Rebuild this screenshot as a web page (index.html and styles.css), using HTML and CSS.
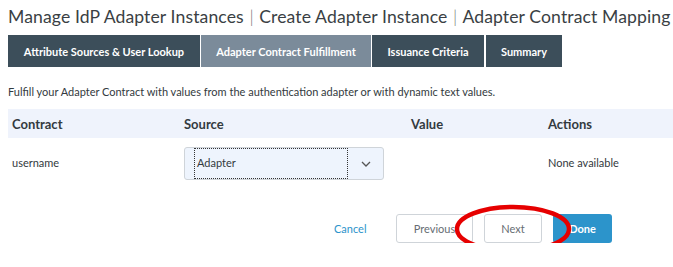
FILE: index.html
```html
<!DOCTYPE html>
<html lang="en">

<head>
    <meta charset="UTF-8">
    <title>Adapter Contract Mapping</title>
    <link rel="stylesheet" href="styles.css">
</head>

<body>
    <div class="page">
        <h1 class="page-title">
            Manage IdP Adapter Instances <span class="sep">|</span> Create Adapter Instance <span class="sep">|</span> Adapter Contract Mapping
        </h1>

        <div class="tabs">
            <div class="tab tab-1">Attribute Sources &amp; User Lookup</div>
            <div class="tab tab-2 active">Adapter Contract Fulfillment</div>
            <div class="tab tab-3">Issuance Criteria</div>
            <div class="tab tab-4">Summary</div>
        </div>

        <p class="intro">Fulfill your Adapter Contract with values from the authentication adapter or with dynamic text values.</p>

        <div class="grid">
            <div class="grid-head">
                <div class="col-contract">Contract</div>
                <div class="col-source">Source</div>
                <div class="col-value">Value</div>
                <div class="col-actions">Actions</div>
            </div>
            <div class="grid-row">
                <div class="col-contract">username</div>
                <div class="col-source">
                    <div class="select">
                        <span class="select-label">Adapter</span>
                        <span class="select-arrow">
                            <svg width="10" height="6" viewBox="0 0 10 6">
                                <path d="M1 1 L5 5 L9 1" fill="none" stroke="#555" stroke-width="1.3" />
                            </svg>
                        </span>
                    </div>
                </div>
                <div class="col-value"></div>
                <div class="col-actions">None available</div>
            </div>
        </div>

        <div class="footer">
            <a class="btn-link" href="#">Cancel</a>
            <button class="btn btn-prev">Previous</button>
            <span class="highlight">
                <button class="btn btn-next">Next</button>
                <svg class="circle" width="122" height="52" viewBox="0 0 122 52">
                    <ellipse cx="61" cy="26" rx="56" ry="22" fill="none" stroke="#e60000" stroke-width="4.5" />
                </svg>
            </span>
            <button class="btn btn-done">Done</button>
        </div>
    </div>
</body>

</html>
```

FILE: styles.css
```css
:root {
    --text: #333a40;
    --tab-dark: #3c4e5a;
    --tab-active: #7b8b9a;
    --head-bg: #eff3fc;
    --blue: #2c94cb;
    --border: #cfd4d9;
}

* {
    margin: 0;
    padding: 0;
    box-sizing: border-box;
}

body {
    font-family: 'Lato', 'Liberation Sans', sans-serif;
    color: var(--text);
    background: #fff;
}

.page {
    padding: 6px 0 0 8px;
}

.page-title {
    font-weight: 400;
    font-size: 17.6px;
    line-height: 22px;
    color: #3a3f44;
    white-space: nowrap;
    letter-spacing: 0.1px;
}

.page-title .sep {
    color: #777;
    font-weight: 300;
    padding: 0 1px;
}

/* wizard tabs */
.tabs {
    display: flex;
    gap: 1px;
    margin-top: 7px;
}

.tab {
    height: 32px;
    display: flex;
    align-items: center;
    justify-content: center;
    background: var(--tab-dark);
    color: #fff;
    font-size: 11px;
    font-weight: 700;
}

.tab.active {
    background: var(--tab-active);
}

.tab-1 { width: 192px; }
.tab-2 { width: 170px; }
.tab-3 { width: 112px; margin-right: 1px; }
.tab-4 { width: 76px; }

.intro {
    font-size: 11px;
    margin-top: 18px;
    line-height: 14px;
}

/* mapping table */
.grid {
    margin-top: 10px;
}

.grid-head,
.grid-row {
    display: grid;
    grid-template-columns: 176px 227px 137px 1fr;
    align-items: center;
}

.grid-head {
    height: 29px;
    background: var(--head-bg);
    font-size: 13px;
    font-weight: 700;
}

.grid-head > div,
.grid-row > div {
    padding-left: 4px;
}

.grid-head .col-source,
.grid-row .col-source,
.grid-head .col-value,
.grid-head .col-actions,
.grid-row .col-actions {
    padding-left: 0;
}

.grid-row {
    margin-top: 9px;
    font-size: 11px;
}

.grid-row .col-contract,
.grid-row .col-actions {
    padding-bottom: 2px;
}

.select {
    width: 200px;
    height: 33px;
    display: flex;
    background: #eef4fd;
    border: 1px solid var(--border);
    border-radius: 3px;
    font-size: 11px;
}

.select-label {
    flex: 1;
    display: flex;
    align-items: center;
    margin-left: 9px;
    border: 1px dotted #333;
    padding: 0 0 2px 2px;
}

.select-arrow {
    width: 35px;
    display: flex;
    align-items: center;
    justify-content: center;
}

/* footer buttons */
.footer {
    display: flex;
    align-items: center;
    margin-top: 34px;
    padding-left: 326px;
}

.btn-link {
    color: var(--blue);
    font-size: 11px;
    text-decoration: none;
    width: 62px;
}

.btn {
    font-family: 'Lato', 'Liberation Sans', sans-serif;
    font-size: 11px;
    height: 29px;
    border-radius: 3px;
    cursor: pointer;
}

.btn-prev,
.btn-next {
    background: #fff;
    border: 1px solid var(--border);
    color: #666d73;
}

.btn-prev {
    width: 77px;
}

.highlight {
    position: relative;
    margin-left: 11px;
}

.btn-next {
    width: 58px;
}

.circle {
    position: absolute;
    left: -32px;
    top: -11px;
}

.btn-done {
    width: 59px;
    margin-left: 11px;
    background: var(--blue);
    border: none;
    color: #fff;
    font-weight: 700;
}
```
